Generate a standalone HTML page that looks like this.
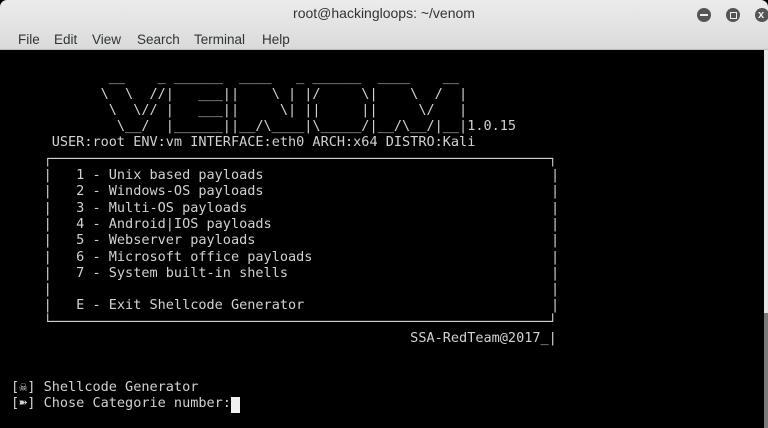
<!DOCTYPE html>
<html><head><meta charset="utf-8"><style>
html,body{margin:0;padding:0;background:#000;width:768px;height:428px;overflow:hidden;position:relative;font-family:"Liberation Sans",sans-serif}
#tb{position:absolute;left:0;top:0;width:768px;height:50px;background:linear-gradient(#ececec,#dadada);border-radius:7px 7px 0 0;border-bottom:1px solid #bdbdbd;box-sizing:border-box}
#title{position:absolute;left:0;width:768px;top:5px;text-align:center;font-size:14px;color:#2e3436}
#menu{position:absolute;top:32px;left:0;font-size:13.5px;color:#2e3436}
#menu span{position:absolute;white-space:nowrap}
.btn{position:absolute;top:8px;width:14px;height:14px;border-radius:50%;background:#555}
pre{position:absolute;margin:0;font-family:"DejaVu Sans Mono","Liberation Mono",monospace;font-size:13.54px;line-height:16.3px;color:#d2d2d2}
#sb1{position:absolute;left:764px;top:50px;width:4px;height:263px;background:#e6e6e6}
#sb2{position:absolute;left:764px;top:313px;width:4px;height:115px;background:#7a7a7a}
#cur{position:absolute;left:231px;top:397px;width:9px;height:16px;background:#f0f0f0}
</style></head><body>
<div id="tb">
<div id="title">root@hackingloops: ~/venom</div>
<div id="menu"><span style="left:18px">File</span><span style="left:54px">Edit</span><span style="left:92px">View</span><span style="left:137px">Search</span><span style="left:194px">Terminal</span><span style="left:262px">Help</span></div>
<div class="btn" style="left:697px"><div style="position:absolute;left:3px;top:6px;width:8px;height:2px;background:#eee"></div></div>
<div class="btn" style="left:726px"><div style="position:absolute;left:3.5px;top:3.5px;width:5px;height:5px;border:1.5px solid #eee"></div></div>
<div class="btn" style="left:755px"><div style="position:absolute;left:3px;top:0;color:#eee;font-size:11px;line-height:14px;font-weight:bold">x</div></div>
</div>
<div id="sb1"></div><div id="sb2"></div>
<pre style="left:11px;top:53px">

            __    _ ______  ____   _ ______  ____    __
           \  \  //|   ___||    \ | |/     \|    \  /  |
            \  \// |   ___||     \| ||     ||     \/   |
             \__/  |______||__/\____|\_____/|__/\__/|__|1.0.15
     USER:root ENV:vm INTERFACE:eth0 ARCH:x64 DISTRO:Kali
    ┌─────────────────────────────────────────────────────────────┐
    |   1 - Unix based payloads
    |   2 - Windows-OS payloads
    |   3 - Multi-OS payloads
    |   4 - Android|IOS payloads
    |   5 - Webserver payloads
    |   6 - Microsoft office payloads
    |   7 - System built-in shells
    |
    |   E - Exit Shellcode Generator
    └─────────────────────────────────────────────────────────────┘
                                                 SSA-RedTeam@2017_|


[☠] Shellcode Generator
[➽] Chose Categorie number:</pre>
<pre style="left:551px;top:53px">







|
|
|
|
|
|
|
|
|</pre>
<div id="cur"></div>
</body></html>
